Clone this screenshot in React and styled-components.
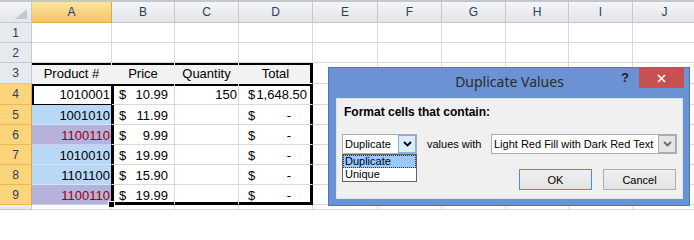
import React from 'react';
import styled, { createGlobalStyle } from 'styled-components';

const GlobalStyle = createGlobalStyle`
  html, body {
    margin: 0;
    padding: 0;
    background: #fff;
  }
  body {
    font-family: "Liberation Sans", Arial, sans-serif;
  }
`;

const COLS = ['A', 'B', 'C', 'D', 'E', 'F', 'G', 'H', 'I', 'J'];

// row 10 only peeks in at the bottom edge, so it has no label
const rows = [
  { n: 1 },
  { n: 2 },
  { n: 3, labels: ['Product #', 'Price', 'Quantity', 'Total'] },
  { n: 4, id: '1010001', price: '10.99', qty: '150', total: '1,648.50', active: true },
  { n: 5, id: '1001010', price: '11.99' },
  { n: 6, id: '1100110', price: '9.99', dup: true },
  { n: 7, id: '1010010', price: '19.99' },
  { n: 8, id: '1101100', price: '15.90' },
  { n: 9, id: '1100110', price: '19.99', dup: true, last: true },
  { n: 10, hideLabel: true },
];

const edges = ({ $t, $r, $b, $l }) => {
  const s = [];
  if ($t) s.push(`inset 0 ${$t}px 0 #000`);
  if ($b) s.push(`inset 0 -${$b}px 0 #000`);
  if ($l) s.push(`inset ${$l}px 0 0 #000`);
  if ($r) s.push(`inset -${$r}px 0 0 #000`);
  return s.length ? `box-shadow: ${s.join(', ')};` : '';
};

const justify = {
  left: 'flex-start',
  right: 'flex-end',
  center: 'center',
  between: 'space-between',
};

const Sheet = styled.div`
  position: relative;
  width: 694px;
  height: 210px;
  overflow: hidden;
  box-sizing: border-box;
  border-top: 2px solid #c4c8ce;
  display: grid;
  grid-template-columns: 32px 80px 63px 64px 74px 65px 64px 64px 63px 64px 64px;
  grid-template-rows: 21px 20px 20px 21px 21px repeat(5, 20px) 5px;
  font-family: "Liberation Sans", Arial, sans-serif;
  font-size: 13px;
`;

const Corner = styled.div`
  box-sizing: border-box;
  background: linear-gradient(#f4f5f7, #e3e6ea);
  border-right: 1px solid #c5c9cf;
  border-bottom: 1px solid #c5c9cf;
  display: flex;
  align-items: flex-end;
  justify-content: flex-end;
  padding: 0 4px 3px 0;
`;

const ColHead = styled.div`
  box-sizing: border-box;
  display: flex;
  align-items: center;
  justify-content: center;
  font-size: 12px;
  color: #27415f;
  background: ${p => (p.$sel ? 'linear-gradient(#fbe4a2, #f5c562)' : 'linear-gradient(#f4f5f7, #e1e4e8)')};
  border-right: 1px solid ${p => (p.$sel ? '#d9a94a' : '#c5c9cf')};
  border-bottom: 1px solid ${p => (p.$sel ? '#d9a94a' : '#c5c9cf')};
`;

const RowHead = styled.div`
  box-sizing: border-box;
  display: flex;
  align-items: center;
  justify-content: center;
  overflow: hidden;
  font-size: 12px;
  color: #27415f;
  background: ${p => (p.$sel ? '#fbd47c' : '#e6e9ed')};
  border-right: 1px solid ${p => (p.$sel ? '#d9a94a' : '#c5c9cf')};
  border-bottom: 1px solid ${p => (p.$sel ? '#e8b95a' : '#c5c9cf')};
`;

const Cell = styled.div`
  position: relative;
  box-sizing: border-box;
  min-width: 0;
  white-space: nowrap;
  display: flex;
  align-items: center;
  justify-content: ${p => justify[p.$align || 'right']};
  padding: 1px ${p => p.$pr ?? 2}px 0 ${p => p.$pl ?? 2}px;
  background: ${p => p.$bg || '#fff'};
  color: ${p => p.$color || '#000'};
  border-right: 1px solid ${p => p.$rc || '#d9d9d9'};
  border-bottom: 1px solid ${p => p.$bc || '#d9d9d9'};
  ${edges}
`;

const Dash = styled.span`
  margin-right: 16px;
`;

const FillHandle = styled.span`
  position: absolute;
  right: -4px;
  bottom: -4px;
  width: 5px;
  height: 5px;
  background: #000;
  border: 1px solid #fff;
  z-index: 2;
`;

const Dialog = styled.div`
  position: absolute;
  left: 328px;
  top: 65px;
  z-index: 5;
  width: 362px;
  height: 139px;
  box-sizing: border-box;
  background: #6b92d4;
  border: 1px solid #4a76bf;
  padding: 0 6px 6px 7px;
  display: flex;
  flex-direction: column;
  font-family: "Liberation Sans", Arial, sans-serif;
  font-size: 11px;
  color: #000;
`;

const TitleBar = styled.div`
  height: 30px;
  flex: none;
  display: grid;
  grid-template-columns: 1fr auto 1fr;
  align-items: start;
`;

const Title = styled.div`
  grid-column: 2;
  padding-top: 5px;
  line-height: 18px;
  font-family: "Noto Sans", "Open Sans", sans-serif;
  font-size: 14px;
  color: #2b2b2b;
`;

const Controls = styled.div`
  grid-column: 3;
  justify-self: end;
  display: flex;
  align-items: center;
  gap: 10px;
  margin-right: -1px;
`;

const HelpMark = styled.span`
  font-family: "Liberation Sans", Arial, sans-serif;
  font-weight: bold;
  font-size: 13px;
  color: #1f1f1f;
  line-height: 20px;
`;

const CloseBtn = styled.div`
  width: 45px;
  height: 20px;
  background: #c75050;
  display: flex;
  align-items: center;
  justify-content: center;
`;

const Client = styled.div`
  flex: 1;
  box-sizing: border-box;
  background: #f0f0f0;
  border: 1px solid #dfe3ea;
  padding: 6px 5px 0 5px;
  display: flex;
  flex-direction: column;
`;

const Heading = styled.div`
  margin-left: 2px;
  font-weight: bold;
  font-size: 12px;
  line-height: 14px;
  color: #000;
`;

const ComboRow = styled.div`
  margin-top: 15px;
  display: flex;
  align-items: center;
`;

const ComboWrap = styled.div`
  position: relative;
`;

const Combo = styled.div`
  box-sizing: border-box;
  width: ${p => p.$w}px;
  height: 20px;
  border: 1px solid #abadb3;
  background: #fff;
  display: flex;
  align-items: center;
  padding-left: 2px;
  margin-left: ${p => p.$ml || 0};
`;

const ComboText = styled.span`
  flex: 1;
  white-space: nowrap;
  overflow: hidden;
`;

const DropBtn = styled.div`
  box-sizing: border-box;
  width: 18px;
  height: 18px;
  border: 1px solid ${p => (p.$hot ? '#7eb4ea' : '#acacac')};
  background: ${p => (p.$hot ? '#dcecfc' : '#e5e5e5')};
  display: flex;
  align-items: center;
  justify-content: center;
`;

const ListBox = styled.div`
  position: absolute;
  left: 0;
  top: 100%;
  width: 75px;
  box-sizing: border-box;
  border: 1px solid #646464;
  background: #fff;
  z-index: 3;
`;

const ListItem = styled.div`
  box-sizing: border-box;
  height: 13px;
  line-height: 12px;
  padding-left: 2px;
  background: ${p => (p.$sel ? '#99c9ff' : 'transparent')};
  outline: ${p => (p.$sel ? '1px dotted #333' : 'none')};
  outline-offset: -1px;
`;

const Label = styled.span`
  margin-left: 10px;
`;

const ButtonRow = styled.div`
  margin-top: 15px;
  display: flex;
  justify-content: flex-end;
  gap: 11px;
  margin-right: 1px;
`;

const Button = styled.button`
  width: 73px;
  height: 21px;
  padding: 0;
  border-radius: 0;
  font-family: "Liberation Sans", Arial, sans-serif;
  font-size: 11px;
  color: #000;
  background: linear-gradient(#efefef, #e3e3e3);
  border: 1px solid ${p => (p.$default ? '#3c93e6' : '#adadad')};
`;

function Chevron({ color }) {
  return (
    <svg width="9" height="6" viewBox="0 0 9 6">
      <path d="M1 1 L4.5 4.5 L8 1" fill="none" stroke={color} strokeWidth="1.9" />
    </svg>
  );
}

function EmptyCells({ from, row }) {
  return COLS.slice(from).map(c => <Cell key={c + row} />);
}

function Money({ value, zero }) {
  return (
    <>
      <span>$</span>
      {zero ? <Dash>-</Dash> : <span>{value}</span>}
    </>
  );
}

function SheetRow({ row }) {
  const sel = row.n >= 4 && row.n <= 9;
  const head = <RowHead $sel={sel}>{row.hideLabel ? null : row.n}</RowHead>;

  if (row.labels) {
    return (
      <>
        {head}
        {row.labels.map((text, i) => (
          <Cell
            key={text}
            $align="center"
            $bg="#f2f2f2"
            $rc={i === 3 ? '#000' : '#f2f2f2'}
            $bc="#f2f2f2"
            $t={2}
            $r={i === 3 ? 2 : 0}
          >
            {text}
          </Cell>
        ))}
        <EmptyCells from={4} row={row.n} />
      </>
    );
  }

  if (!row.id) {
    return (
      <>
        {head}
        <EmptyCells from={0} row={row.n} />
      </>
    );
  }

  const t = row.active ? 2 : 0;
  const b = row.last ? 2 : 0;
  const bc = row.last ? '#000' : undefined;
  const aBg = row.active ? '#fff' : row.dup ? '#b5b2dc' : '#b9d8f6';

  return (
    <>
      {head}
      <Cell
        $bg={aBg}
        $color={row.dup ? '#9c0006' : '#000'}
        $rc="#000"
        $bc={row.active ? '#000' : 'rgba(255,255,255,0.35)'}
        $t={t}
        $l={row.active ? 2 : 0}
        $pr={1}
      >
        {row.id}
        {row.last && <FillHandle />}
      </Cell>
      <Cell $align="between" $pl={7} $pr={6} $l={2} $t={t} $b={b} $bc={bc}>
        <Money value={row.price} />
      </Cell>
      <Cell $pr={1} $t={t} $b={b} $bc={bc}>
        {row.qty}
      </Cell>
      <Cell $align="between" $pl={9} $pr={5} $rc="#000" $r={2} $t={t} $b={b} $bc={bc}>
        <Money value={row.total} zero={!row.total} />
      </Cell>
      <EmptyCells from={4} row={row.n} />
    </>
  );
}

function DuplicateDialog() {
  return (
    <Dialog>
      <TitleBar>
        <Title>Duplicate Values</Title>
        <Controls>
          <HelpMark>?</HelpMark>
          <CloseBtn>
            <svg width="9" height="9" viewBox="0 0 9 9">
              <path d="M1 1 L8 8 M8 1 L1 8" stroke="#fff" strokeWidth="1.7" />
            </svg>
          </CloseBtn>
        </Controls>
      </TitleBar>
      <Client>
        <Heading>Format cells that contain:</Heading>
        <ComboRow>
          <ComboWrap>
            <Combo $w={75}>
              <ComboText>Duplicate</ComboText>
              <DropBtn $hot>
                <Chevron color="#000" />
              </DropBtn>
            </Combo>
            <ListBox>
              <ListItem $sel>Duplicate</ListItem>
              <ListItem>Unique</ListItem>
            </ListBox>
          </ComboWrap>
          <Label>values with</Label>
          <Combo $w={186} $ml="auto">
            <ComboText>Light Red Fill with Dark Red Text</ComboText>
            <DropBtn>
              <Chevron color="#6a6a6a" />
            </DropBtn>
          </Combo>
        </ComboRow>
        <ButtonRow>
          <Button $default>OK</Button>
          <Button>Cancel</Button>
        </ButtonRow>
      </Client>
    </Dialog>
  );
}

export default function App() {
  return (
    <>
      <GlobalStyle />
      <Sheet>
        <Corner>
          <svg width="12" height="10" viewBox="0 0 12 10">
            <path d="M12 0 L12 10 L0 10 Z" fill="#c3c8ce" />
          </svg>
        </Corner>
        {COLS.map(c => (
          <ColHead key={c} $sel={c === 'A'}>
            {c}
          </ColHead>
        ))}
        {rows.map(row => (
          <SheetRow key={row.n} row={row} />
        ))}
        <DuplicateDialog />
      </Sheet>
    </>
  );
}
